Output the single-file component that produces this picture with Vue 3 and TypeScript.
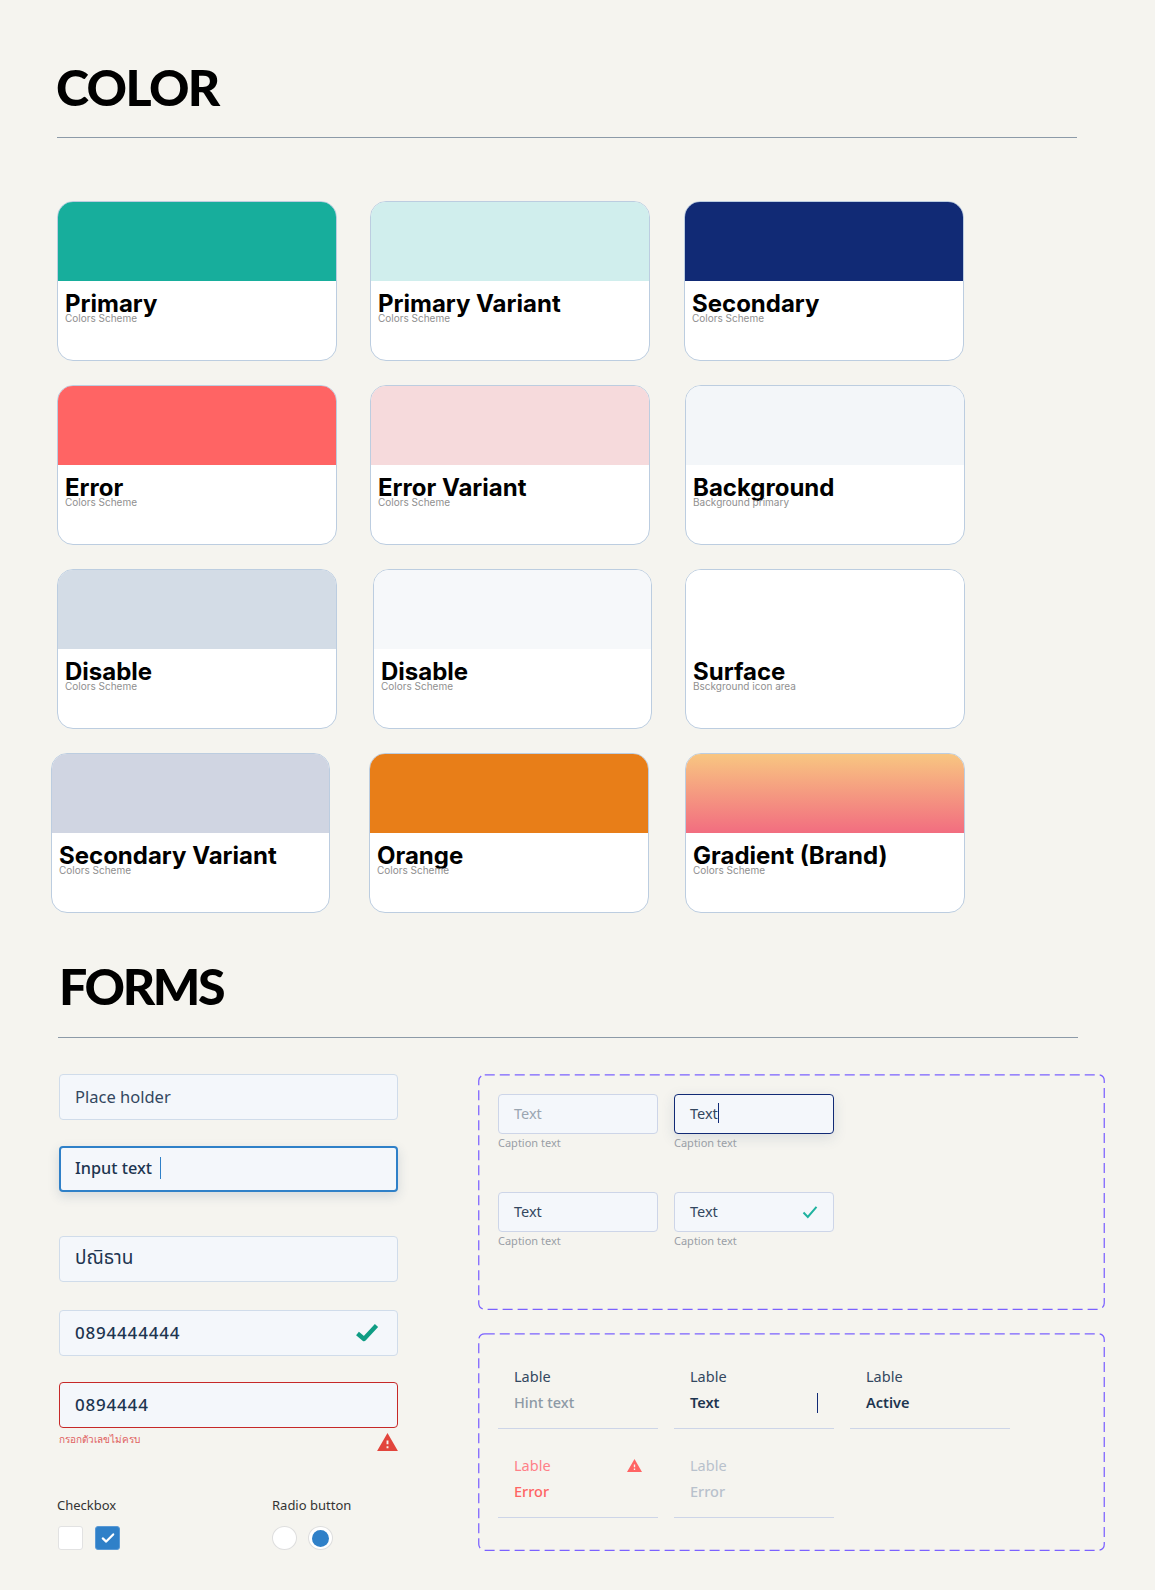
<script setup lang="ts">
interface Swatch {
  title: string;
  sub: string;
  fill: string;
  offset: number;
  width: number;
}

// offset is the space in front of each card, the source artboard is not evenly spaced
const rows: Swatch[][] = [
  [
    { title: 'Primary', sub: 'Colors Scheme', fill: '#17ae9c', offset: 57, width: 280 },
    { title: 'Primary Variant', sub: 'Colors Scheme', fill: '#d0eeed', offset: 33, width: 280 },
    { title: 'Secondary', sub: 'Colors Scheme', fill: '#112a75', offset: 34, width: 280 },
  ],
  [
    { title: 'Error', sub: 'Colors Scheme', fill: '#ff6464', offset: 57, width: 280 },
    { title: 'Error Variant', sub: 'Colors Scheme', fill: '#f6dadc', offset: 33, width: 280 },
    { title: 'Background', sub: 'Background primary', fill: '#f3f6f9', offset: 35, width: 280 },
  ],
  [
    { title: 'Disable', sub: 'Colors Scheme', fill: '#d3dce6', offset: 57, width: 280 },
    { title: 'Disable', sub: 'Colors Scheme', fill: '#f6f8fa', offset: 36, width: 279 },
    { title: 'Surface', sub: 'Bsckground icon area', fill: '#ffffff', offset: 33, width: 280 },
  ],
  [
    { title: 'Secondary Variant', sub: 'Colors Scheme', fill: '#d0d5e2', offset: 51, width: 279 },
    { title: 'Orange', sub: 'Colors Scheme', fill: '#e87e18', offset: 39, width: 280 },
    { title: 'Gradient (Brand)', sub: 'Colors Scheme', fill: 'linear-gradient(180deg, #f8c681, #f26d80)', offset: 36, width: 280 },
  ],
];

const warning = 'M1 21h22L12 2 1 21zm12-3h-2v-2h2v2zm0-4h-2v-4h2v4z';
</script>

<template>
  <div class="page">
    <section class="color">
      <h1 class="heading">COLOR</h1>
      <div class="rule"></div>
      <div class="swatches">
        <div v-for="(row, r) in rows" :key="r" class="swatch-row">
          <div
            v-for="card in row"
            :key="card.title + card.fill"
            class="card"
            :style="{ marginLeft: card.offset + 'px', width: card.width + 'px' }"
          >
            <div class="fill" :style="{ background: card.fill }"></div>
            <div class="card-title">{{ card.title }}</div>
            <div class="card-sub">{{ card.sub }}</div>
          </div>
        </div>
      </div>
    </section>

    <section class="forms">
      <h1 class="heading heading-forms">FORMS</h1>
      <div class="rule rule-forms"></div>
      <div class="forms-body">
        <div class="left">
          <div class="input placeholder">Place holder</div>
          <div class="input focused">Input text<span class="caret"></span></div>
          <div class="input filled thai">ปณิธาน</div>
          <div class="input filled success">
            <span class="digits">0894444444</span>
            <svg class="big-check" viewBox="0 0 24 19" width="24" height="19">
              <path d="M2.5 10.5 9 16 21.5 2.5" fill="none" stroke="#0f9d84" stroke-width="4.4" stroke-linejoin="round" />
            </svg>
          </div>
          <div class="input filled invalid"><span class="digits">0894444</span></div>
          <div class="error-line">
            <span class="error-msg">กรอกตัวเลขไม่ครบ</span>
            <svg viewBox="1 2 22 19" width="21" height="18"><path :d="warning" fill="#e2453c" /></svg>
          </div>
          <div class="controls">
            <div class="control-group">
              <div class="control-label">Checkbox</div>
              <div class="control-row">
                <span class="box"></span>
                <span class="box box-on">
                  <svg viewBox="0 0 14 12" width="14" height="12">
                    <path d="M1.8 6.4 5.2 9.6 12.2 2.4" fill="none" stroke="#fff" stroke-width="2.2" stroke-linecap="round" stroke-linejoin="round" />
                  </svg>
                </span>
              </div>
            </div>
            <div class="control-group">
              <div class="control-label">Radio button</div>
              <div class="control-row radios">
                <span class="radio"></span>
                <span class="radio"><i class="dot"></i></span>
              </div>
            </div>
          </div>
        </div>

        <div class="right">
          <div class="dashed dashed-inputs">
            <svg class="dash-line"><rect x="0.75" y="0.75" rx="6" ry="6" /></svg>
            <div class="small-grid">
              <div>
                <div class="small-input muted">Text</div>
                <div class="caption">Caption text</div>
              </div>
              <div>
                <div class="small-input active">Text<span class="small-caret"></span></div>
                <div class="caption">Caption text</div>
              </div>
              <div>
                <div class="small-input">Text</div>
                <div class="caption">Caption text</div>
              </div>
              <div>
                <div class="small-input">
                  Text
                  <svg class="small-check" viewBox="0 0 16 14" width="16" height="14">
                    <path d="M1.5 7.5 5.8 12 14.5 1.8" fill="none" stroke="#1fb29f" stroke-width="2" />
                  </svg>
                </div>
                <div class="caption">Caption text</div>
              </div>
            </div>
          </div>

          <div class="dashed dashed-lines">
            <svg class="dash-line"><rect x="0.75" y="0.75" rx="6" ry="6" /></svg>
            <div class="line-grid">
              <div class="line-field">
                <div class="line-label">Lable</div>
                <div class="line-value hint">Hint text</div>
              </div>
              <div class="line-field">
                <div class="line-label">Lable</div>
                <div class="line-value strong">Text</div>
                <span class="line-caret"></span>
              </div>
              <div class="line-field">
                <div class="line-label">Lable</div>
                <div class="line-value strong">Active</div>
              </div>
              <div class="line-field is-error">
                <div class="line-label">Lable</div>
                <div class="line-value">Error</div>
                <svg class="line-warn" viewBox="1 2 22 19" width="15" height="13"><path :d="warning" fill="#ff6464" /></svg>
              </div>
              <div class="line-field is-off">
                <div class="line-label">Lable</div>
                <div class="line-value">Error</div>
              </div>
            </div>
          </div>
        </div>
      </div>
    </section>
  </div>
</template>

<style>
html,
body {
  background: #f5f4ef;
}
</style>

<style scoped>
.page {
  width: 1155px;
  height: 1590px;
  overflow: hidden;
  background: #f5f4ef;
  font-family: "Noto Sans", sans-serif;
}

/* headings */
.heading {
  margin: 0 0 0 56px;
  height: 137px;
  padding-top: 57px;
  box-sizing: border-box;
  font-family: Lato, sans-serif;
  font-size: 50px;
  line-height: 60px;
  font-weight: 900;
  letter-spacing: -1.6px;
  color: #000;
}

.heading-forms {
  height: 84px;
  margin-left: 59px;
  padding-top: 3px;
  letter-spacing: -2.4px;
}

.rule {
  margin-left: 57px;
  width: 1020px;
  height: 1px;
  background: #8c9aa8;
}

.rule-forms {
  margin-left: 58px;
}

/* colour cards */
.swatches {
  margin-top: 63px;
  display: flex;
  flex-direction: column;
  gap: 24px;
}

.swatch-row {
  display: flex;
}

.card {
  height: 160px;
  flex: none;
  box-sizing: border-box;
  border: 1px solid #bccde0;
  border-radius: 16px;
  overflow: hidden;
  background: #fff;
  font-family: Inter, sans-serif;
}

.fill {
  height: 79px;
}

.card-title {
  padding: 8px 0 0 7px;
  font-size: 24px;
  line-height: 29px;
  font-weight: 700;
  color: #000;
}

.card-sub {
  margin-top: -6px;
  padding-left: 7px;
  font-size: 10px;
  line-height: 12px;
  color: #8f8f8f;
}

.forms {
  margin-top: 40px;
}

.forms-body {
  display: flex;
  margin-top: 36px;
  margin-left: 59px;
}

/* left column */
.left {
  width: 339px;
  flex: none;
}

.input {
  height: 46px;
  box-sizing: border-box;
  display: flex;
  align-items: center;
  padding: 0 15px 2px;
  border: 1px solid #d0dcea;
  border-radius: 4px;
  background: #f4f7fb;
  font-size: 16.5px;
  color: #33475f;
}

.focused {
  margin-top: 26px;
  border: 2px solid #2f80c8;
  padding: 0 14px 2px;
  font-size: 16.3px;
  font-weight: 500;
  color: #1d3550;
  box-shadow: 0 4px 12px rgba(40, 70, 110, 0.16);
}

.caret {
  width: 1px;
  height: 22px;
  margin-left: 8px;
  background: #2f80c8;
}

.filled {
  color: #1d3550;
}

.thai {
  margin-top: 44px;
  font-family: "Noto Sans", "Noto Sans Thai", "Noto Sans CJK SC", sans-serif;
  font-size: 19px;
}

.success {
  margin-top: 28px;
  justify-content: space-between;
  padding-right: 18px;
}

.digits {
  font-size: 17px;
  font-weight: 500;
  letter-spacing: 0.8px;
}

.invalid {
  margin-top: 26px;
  border: 1.5px solid #c62828;
}

.error-line {
  display: flex;
  justify-content: space-between;
  margin-top: 5px;
}

.error-msg {
  margin-top: -1px;
  font-size: 10px;
  line-height: 14px;
  color: #e06060;
}

.controls {
  display: flex;
  margin-top: 46px;
  margin-left: -2px;
}

.control-group {
  width: 215px;
  flex: none;
}

.control-label {
  margin-top: -1px;
  margin-bottom: 1px;
  font-size: 13px;
  line-height: 18px;
  color: #333;
}

.control-row {
  display: flex;
  gap: 12px;
  margin-top: 12px;
  margin-left: 1px;
}

.radios {
  gap: 11px;
  margin-left: 0;
}

.box {
  width: 25px;
  height: 24px;
  box-sizing: border-box;
  display: flex;
  align-items: center;
  justify-content: center;
  border: 1px solid #e2e2e2;
  border-radius: 3px;
  background: #fff;
}

.box-on {
  border-color: #5a9ad6;
  background: #2f80c8;
}

.radio {
  width: 25px;
  height: 24px;
  box-sizing: border-box;
  display: flex;
  align-items: center;
  justify-content: center;
  border: 1px solid #dedede;
  border-radius: 50%;
  background: #fff;
}

.dot {
  width: 17px;
  height: 17px;
  border-radius: 50%;
  background: #2f80c8;
}

/* right column */
.right {
  margin-left: 80px;
  width: 627px;
  flex: none;
}

.dashed {
  position: relative;
  box-sizing: border-box;
  padding-left: 20px;
}

.dash-line {
  position: absolute;
  inset: 0;
  width: 100%;
  height: 100%;
  pointer-events: none;
}

.dash-line rect {
  width: calc(100% - 1.5px);
  height: calc(100% - 1.5px);
  fill: none;
  stroke: #7b61ff;
  stroke-width: 1.25;
  stroke-dasharray: 10 5;
}

.dashed-inputs {
  height: 236px;
  padding-top: 20px;
}

.dashed-lines {
  height: 218px;
  margin-top: 23px;
  padding-top: 34px;
}

.small-grid {
  display: grid;
  grid-template-columns: 160px 160px;
  grid-auto-rows: 98px;
  column-gap: 16px;
}

.small-input {
  height: 40px;
  box-sizing: border-box;
  display: flex;
  align-items: center;
  justify-content: space-between;
  padding: 0 15px 2px;
  border: 1px solid #cdd5e8;
  border-radius: 4px;
  background: #f4f7fb;
  font-size: 14.5px;
  color: #33475f;
}

.small-check {
  margin-top: 2px;
}

.muted {
  color: #9aa5b1;
}

.active {
  justify-content: flex-start;
  border-color: #112a75;
  box-shadow: 0 4px 14px rgba(40, 70, 110, 0.13);
}

.small-caret {
  width: 1px;
  height: 20px;
  background: #112a75;
}

.caption {
  margin-top: 1px;
  font-size: 11px;
  line-height: 15px;
  color: #9a9fa6;
}

.line-grid {
  display: grid;
  grid-template-columns: 160px 160px 160px;
  grid-auto-rows: 62px;
  column-gap: 16px;
  row-gap: 27px;
}

.line-field {
  position: relative;
  box-sizing: border-box;
  padding-left: 16px;
  border-bottom: 1px solid #cdd5e8;
}

.line-label {
  margin-top: -1px;
  font-size: 14.5px;
  line-height: 20px;
  color: #33475f;
}

.line-value {
  margin-top: 6px;
  font-size: 14.5px;
  line-height: 20px;
}

.hint {
  color: #8d99a6;
  font-weight: 500;
}

.strong {
  color: #1d3550;
  font-weight: 600;
}

.line-caret {
  position: absolute;
  left: 143px;
  top: 26px;
  width: 1px;
  height: 20px;
  background: #112a75;
}

.is-error .line-label {
  color: #ff8088;
}

.is-error .line-value {
  color: #ff6464;
  font-weight: 500;
}

.line-warn {
  position: absolute;
  left: 129px;
  top: 3px;
}

.is-off .line-label,
.is-off .line-value {
  color: #b8c1cc;
}

.is-off .line-value {
  font-weight: 500;
}
</style>
